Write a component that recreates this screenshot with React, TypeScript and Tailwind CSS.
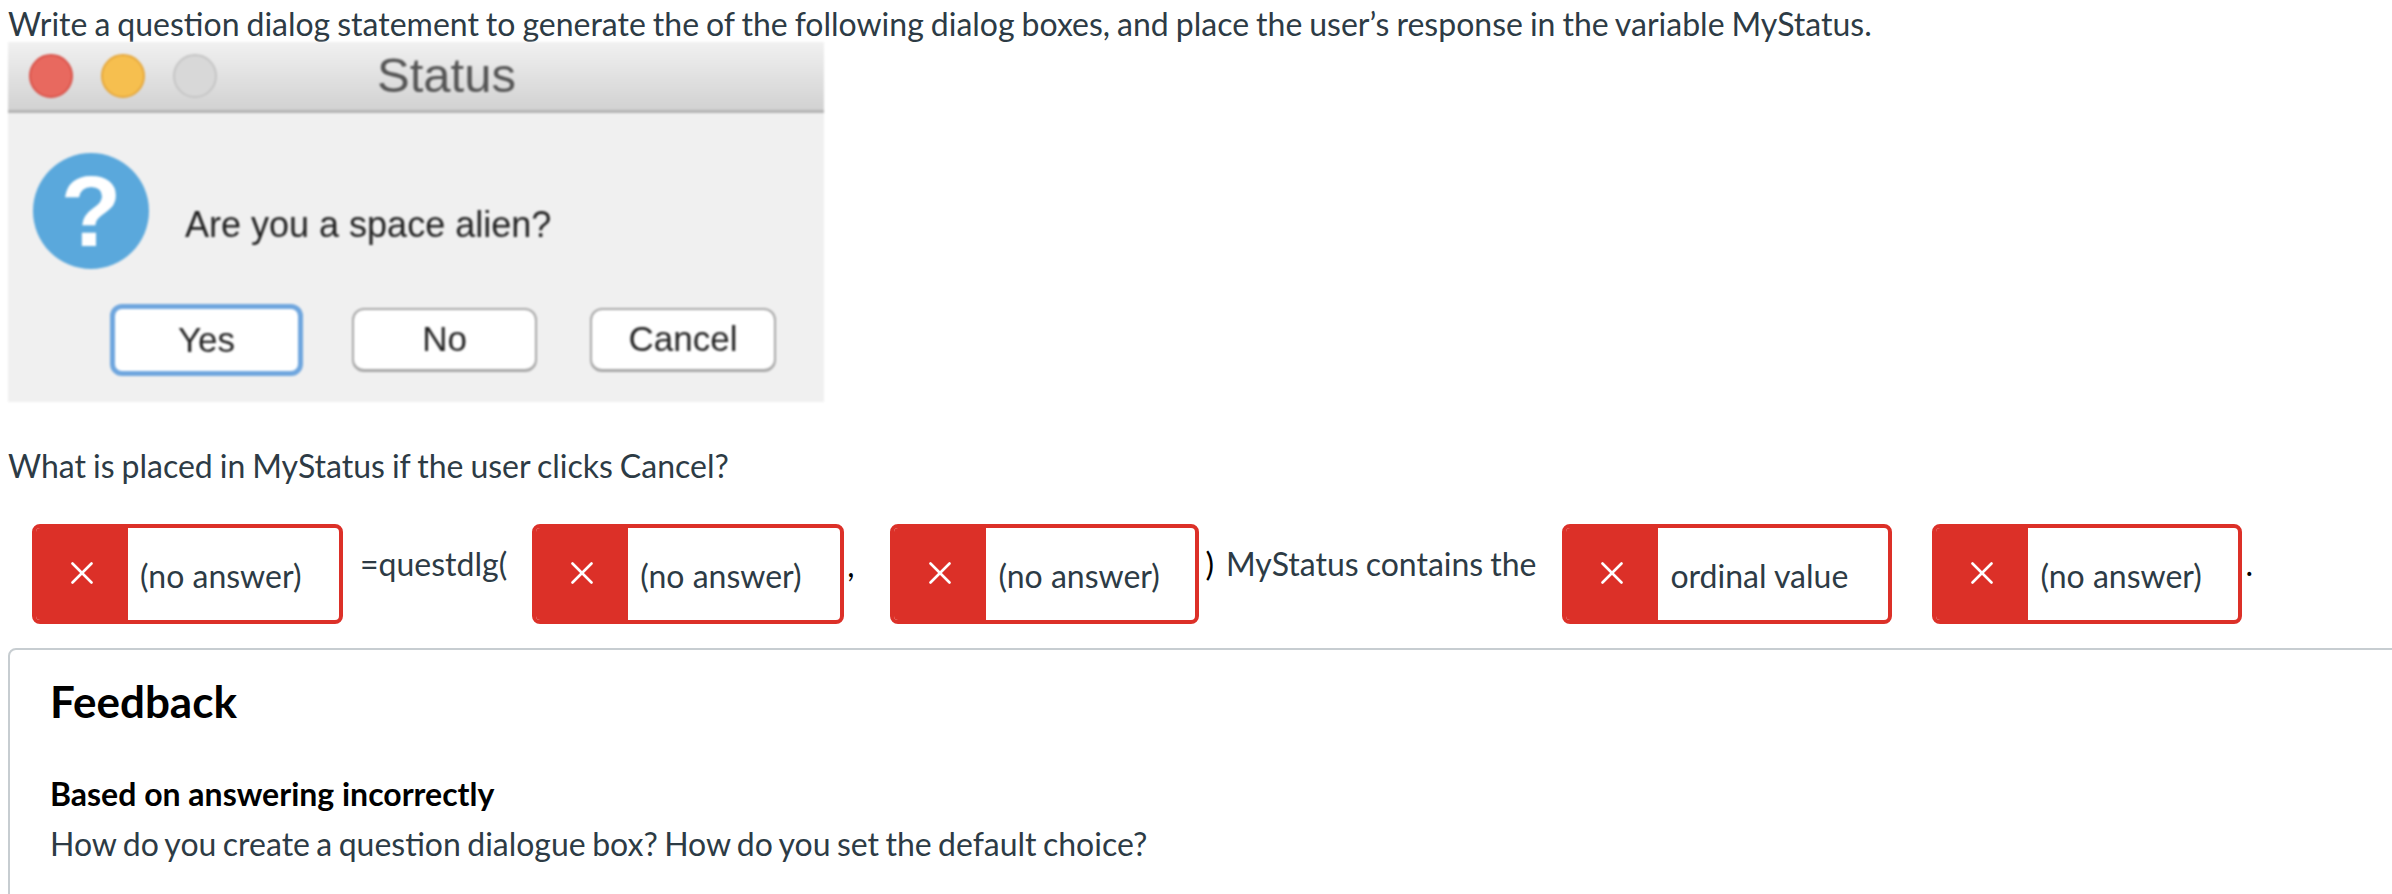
const LATO = "font-['Lato',sans-serif]"

function AnswerBox({ text, width, className }: { text: string; width: string; className: string }) {
  return (
    <div className={`flex h-[100px] shrink-0 overflow-hidden rounded-lg border-4 border-[#dc3028] bg-white ${width} ${className}`}>
      <div className="flex w-[92px] shrink-0 items-center justify-center bg-[#dc3028] pb-[2px]">
        <svg width="22" height="22" viewBox="0 0 22 22" stroke="#fff" strokeWidth="2.6" strokeLinecap="round">
          <line x1="1.5" y1="1.5" x2="20.5" y2="20.5" />
          <line x1="20.5" y1="1.5" x2="1.5" y2="20.5" />
        </svg>
      </div>
      <span className="mt-[28px] ml-3 text-[32px] leading-10 whitespace-nowrap text-[#2d3b45]">{text}</span>
    </div>
  )
}

function Dot({ color }: { color: string }) {
  return <div className={`size-[44px] rounded-full border-2 ${color}`} />
}

function DialogButton({ label, className }: { label: string; className: string }) {
  return (
    <div className={`flex items-center justify-center rounded-xl bg-white text-[35px] text-[#222] ${className}`}>
      {label}
    </div>
  )
}

export default function App() {
  return (
    <div className={`h-[894px] w-full overflow-hidden bg-white pl-2 text-[#2d3b45] ${LATO}`}>
      <p className="h-[42px] text-[32px] leading-[48px] whitespace-nowrap [word-spacing:-1.2px]">
        Write a question dialog statement to generate the of the following dialog boxes, and place the user’s response in the variable MyStatus.
      </p>

      {/* dialog picture */}
      <div className="h-[360px] w-[816px] bg-[#f0f0f0] font-['Liberation_Sans',sans-serif] blur-[0.8px]">
        <div className="relative flex h-[71px] items-center gap-[28px] border-b-[3px] border-[#b4b4b4] bg-gradient-to-b from-[#f1f1f1] to-[#d2d2d2] pl-[21px]">
          <Dot color="border-[#d9534a] bg-[#e8695f]" />
          <Dot color="border-[#e6a83c] bg-[#f6bf4f]" />
          <Dot color="border-[#c5c5c5] bg-[#d8d8d8]" />
          <span className="absolute top-[3px] left-[369px] text-[49px] leading-[60px] text-[#555]">Status</span>
        </div>
        <div className="flex pl-[25px] pt-[40px]">
          <div className="flex size-[116px] items-center justify-center rounded-full bg-[#5aa8dc] text-[100px] leading-none font-bold text-white">
            ?
          </div>
          <span className="mt-[52px] ml-[36px] text-[36px] leading-10 text-[#222]">Are you a space alien?</span>
        </div>
        <div className="mt-[35px] flex items-center pl-[102px]">
          <DialogButton label="Yes" className="h-[72px] w-[193px] border-[5px] border-[#6fa6de]" />
          <DialogButton label="No" className="ml-[49px] h-[64px] w-[185px] border-2 border-b-[3px] border-[#a8a8a8]" />
          <DialogButton label="Cancel" className="ml-[53px] h-[64px] w-[186px] border-2 border-b-[3px] border-[#a8a8a8]" />
        </div>
      </div>

      <p className="mt-[44px] h-[40px] text-[32px] leading-10 whitespace-nowrap [word-spacing:-1.2px]">What is placed in MyStatus if the user clicks Cancel?</p>

      {/* answer row */}
      <div className="mt-[38px] flex items-start text-[32px] leading-10 whitespace-nowrap">
        <AnswerBox text="(no answer)" width="w-[311px]" className="ml-[24px]" />
        <span className="mt-5 ml-[17px]">=questdlg(</span>
        <AnswerBox text="(no answer)" width="w-[312px]" className="ml-[25px]" />
        <span className="mt-[21px] ml-[3px] text-black">,</span>
        <AnswerBox text="(no answer)" width="w-[309px]" className="ml-[36px]" />
        <span className="mt-5 ml-[6px] text-black">)</span>
        <span className="mt-5 ml-3 [word-spacing:-1.2px]">MyStatus contains the</span>
        <AnswerBox text="ordinal value" width="w-[330px]" className="ml-[26px]" />
        <AnswerBox text="(no answer)" width="w-[310px]" className="ml-[40px]" />
        <span className="mt-5 ml-[3px] text-black">.</span>
      </div>

      {/* feedback panel */}
      <div className="mt-[24px] -mr-4 h-[300px] rounded-t-lg border-2 border-[#c7cdd1] pt-[21px] pl-[40px] text-black">
        <h2 className="text-[44px] leading-[60px] font-bold">Feedback</h2>
        <p className="mt-[43px] text-[32px] leading-10 font-bold">Based on answering incorrectly</p>
        <p className="mt-[10px] text-[32px] leading-10 text-[#2d3b45] [word-spacing:-1.8px]">How do you create a question dialogue box? How do you set the default choice?</p>
      </div>
    </div>
  )
}
